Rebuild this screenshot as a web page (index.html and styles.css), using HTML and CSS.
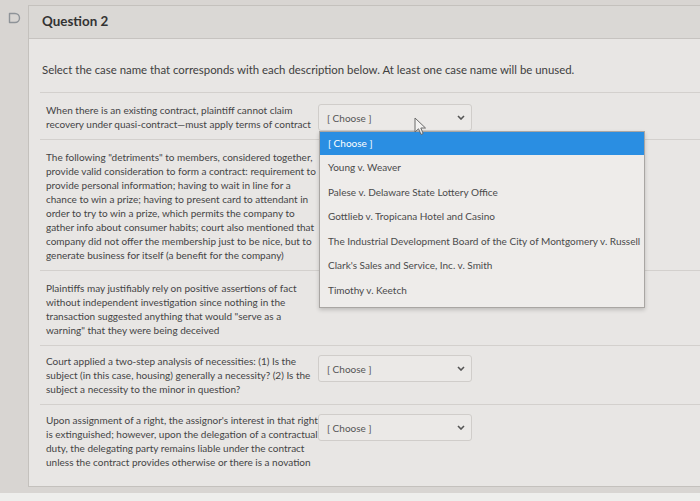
FILE: index.html
```html
<!DOCTYPE html>
<html>
<head>
<meta charset="utf-8">
<link rel="stylesheet" href="styles.css">
</head>
<body>
<div class="page">
  <div class="gutter">
    <svg class="flag" width="13" height="12" viewBox="0 0 13 12"><path d="M1.5 1.5 H7 A4.5 4.5 0 0 1 7 10.5 H1.5 Z" fill="none" stroke="#8e9398" stroke-width="1.4" stroke-linejoin="round"/></svg>
  </div>
  <div class="card">
    <div class="header"><h2 class="title">Question 2</h2></div>
    <div class="body">
      <p class="intro">Select the case name that corresponds with each description below. At least one case name will be unused.</p>
      <div class="rows">
        <div class="row r1">
          <div class="desc">When there is an existing contract, plaintiff cannot claim recovery under quasi-contract—must apply terms of contract</div>
          <div class="select-wrap">
            <div class="select"><span>[ Choose ]</span><svg class="chev" width="8" height="5" viewBox="0 0 8 5"><path d="M1 1 L4 4 L7 1" fill="none" stroke="#555" stroke-width="1.6"/></svg></div>
            <ul class="menu">
              <li class="active">[ Choose ]</li>
              <li>Young v. Weaver</li>
              <li>Palese v. Delaware State Lottery Office</li>
              <li>Gottlieb v. Tropicana Hotel and Casino</li>
              <li>The Industrial Development Board of the City of Montgomery v. Russell</li>
              <li>Clark's Sales and Service, Inc. v. Smith</li>
              <li>Timothy v. Keetch</li>
            </ul>
            <svg class="cursor" width="14" height="20" viewBox="0 0 14 20"><path d="M1 1 L1 15 L4.5 11.8 L7 17.5 L9.2 16.5 L6.8 11 L11.5 11 Z" fill="#f4f3f2" fill-opacity="0.85" stroke="#6b6b6b" stroke-width="1"/></svg>
          </div>
        </div>
        <div class="row r2">
          <div class="desc">The following "detriments" to members, considered together, provide valid consideration to form a contract: requirement to provide personal information; having to wait in line for a chance to win a prize; having to present card to attendant in order to try to win a prize, which permits the company to gather info about consumer habits; court also mentioned that company did not offer the membership just to be nice, but to generate business for itself (a benefit for the company)</div>
        </div>
        <div class="row r3">
          <div class="desc">Plaintiffs may justifiably rely on positive assertions of fact without independent investigation since nothing in the transaction suggested anything that would "serve as a warning" that they were being deceived</div>
        </div>
        <div class="row r4">
          <div class="desc">Court applied a two-step analysis of necessities: (1) Is the subject (in this case, housing) generally a necessity? (2) Is the subject a necessity to the minor in question?</div>
          <div class="select-wrap">
            <div class="select"><span>[ Choose ]</span><svg class="chev" width="8" height="5" viewBox="0 0 8 5"><path d="M1 1 L4 4 L7 1" fill="none" stroke="#555" stroke-width="1.6"/></svg></div>
          </div>
        </div>
        <div class="row r5">
          <div class="desc">Upon assignment of a right, the assignor's interest in that right is extinguished; however, upon the delegation of a contractual duty, the delegating party remains liable under the contract unless the contract provides otherwise or there is a novation</div>
          <div class="select-wrap">
            <div class="select"><span>[ Choose ]</span><svg class="chev" width="8" height="5" viewBox="0 0 8 5"><path d="M1 1 L4 4 L7 1" fill="none" stroke="#555" stroke-width="1.6"/></svg></div>
          </div>
        </div>
      </div>
    </div>
  </div>
</div>
</body>
</html>
```
FILE: styles.css
```css
html, body {
  margin: 0;
  padding: 0;
  background: #d8d5d2;
  font-family: Lato, "Noto Sans", sans-serif;
  color: #3e3e3e;
  overflow: hidden;
}
.page {
  display: flex;
  padding-top: 5px;
  height: 496px;
  background: linear-gradient(to bottom, #d8d5d2 0, #d8d5d2 493px, #eeeeec 493px);
}
.gutter {
  width: 28px;
  flex: none;
  padding-top: 7px;
  padding-left: 8px;
  box-sizing: border-box;
}
.flag { display: block; }
.card {
  flex: none;
  width: 690px;
  height: 482px;
  border: 1px solid #c4c1bd;
  border-right: none;
  background: #e8e6e4;
  box-sizing: border-box;
}
.header {
  height: 32px;
  background: #dad8d5;
  border-bottom: 1px solid #c6c3c0;
  padding-left: 13px;
  display: flex;
  align-items: center;
}
.title {
  margin: 0;
  font-size: 13.4px;
  font-weight: 700;
  color: #333;
  padding-bottom: 2px;
}
.body {
  padding-left: 11px;
}
.intro {
  margin: 0;
  padding: 23px 0 14px 2px;
  font-size: 11.4px;
  line-height: 16px;
  color: #404040;
  border-bottom: 1px solid #d3d0cd;
}
.row {
  display: flex;
  align-items: flex-start;
  padding: 10px 0 8px 6px;
  border-bottom: 1px solid #d3d0cd;
  font-size: 10px;
  line-height: 14px;
  color: #444;
}
.r4, .r5 { padding-top: 8px; }
.r5 { border-bottom: none; }
.desc {
  width: 272px;
  flex: none;
}
.select-wrap {
  position: relative;
  margin-top: 1px;
}
.select {
  width: 154px;
  height: 27px;
  box-sizing: border-box;
  border: 1px solid #d0cdca;
  border-radius: 3px;
  background: #ebe9e7;
  display: flex;
  align-items: center;
  justify-content: space-between;
  padding: 0 6px 0 8px;
  color: #555;
  font-size: 10px;
}
.chev { display: block; }
.menu {
  position: absolute;
  left: 1px;
  top: 27px;
  width: 324px;
  margin: 0;
  padding: 0 0 4px 0;
  list-style: none;
  background: #eeecea;
  border: 1px solid #a9a6a3;
  box-shadow: 0 2px 4px rgba(0,0,0,0.18);
  z-index: 2;
}
.menu li {
  height: 24.6px;
  line-height: 24.6px;
  padding-left: 8px;
  font-size: 10px;
  color: #4a4a4a;
  white-space: nowrap;
}
.menu li.active {
  background: #2a8ee2;
  color: #fff;
  height: 23px;
  line-height: 23px;
}
.cursor {
  position: absolute;
  left: 96px;
  top: 13px;
  z-index: 3;
}
```
